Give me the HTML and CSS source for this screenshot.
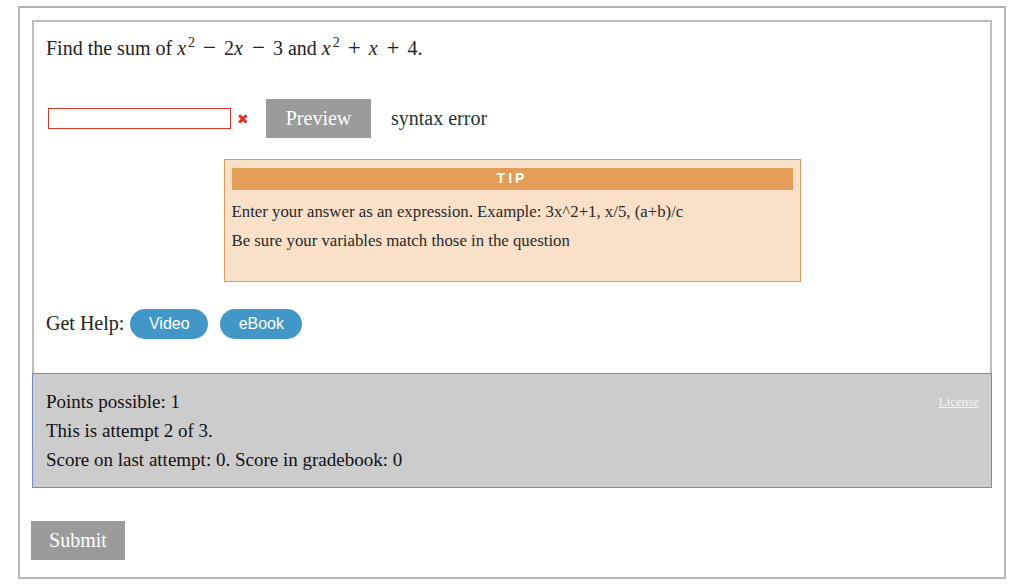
FILE: index.html
```html
<!DOCTYPE html>
<html>
<head>
<meta charset="utf-8">
<link rel="stylesheet" href="styles.css">
</head>
<body>
<div class="outer">
  <div class="question">
    <p class="prompt">Find the sum of <span class="math"><i>x</i><sup>2</sup><span class="op">−</span>2<i>x</i><span class="op">−</span>3</span> and <span class="math"><i>x</i><sup>2</sup><span class="op">+</span><i>x</i><span class="op">+</span>4</span>.</p>
    <div class="answer-row">
      <input class="answer" type="text">
      <span class="mark">✖</span>
      <button class="btn preview">Preview</button>
      <span class="syntax">syntax error</span>
    </div>
    <div class="tip">
      <div class="tip-head">TIP</div>
      <p class="tip-line">Enter your answer as an expression. Example: 3x^2+1, x/5, (a+b)/c</p>
      <p class="tip-line">Be sure your variables match those in the question</p>
    </div>
    <div class="help">
      <span class="help-label">Get Help:</span>
      <span class="pill">Video</span>
      <span class="pill pill-wide">eBook</span>
    </div>
  </div>
  <div class="footer">
    <div class="footer-lines">
      <div>Points possible: 1</div>
      <div>This is attempt 2 of 3.</div>
      <div>Score on last attempt: 0. Score in gradebook: 0</div>
    </div>
    <a class="license" href="#">License</a>
  </div>
  <button class="btn submit">Submit</button>
</div>
</body>
</html>
```
FILE: styles.css
```css
html, body {
  margin: 0;
  padding: 0;
  background: #fff;
}
body {
  font-family: "Liberation Serif", "Times New Roman", serif;
  color: #222;
}
.outer {
  margin: 6px 18px 0 18px;
  width: 960px;
  height: 557px;
  border: 2px solid #b5b5b5;
  padding: 12px 12px 0 12px;
}
.question {
  border: 2px solid #bdbdbd;
  border-bottom: none;
  padding: 12px 12px 0 12px;
  height: 339px;
}
.prompt {
  margin: 0;
  font-size: 20px;
  line-height: 28px;
}
.math i {
  font-style: italic;
  margin-right: 1px;
}
.math sup {
  font-size: 14px;
  vertical-align: 0;
  position: relative;
  top: -8px;
  margin-left: 1px;
}
.op {
  font-size: 23px;
  line-height: 20px;
  margin: 0 8px;
}
.answer-row {
  display: flex;
  align-items: center;
  margin-top: 34px;
  height: 39px;
}
.answer {
  box-sizing: border-box;
  width: 183px;
  height: 21px;
  margin: 0 0 0 2px;
  border: 1px solid #e6332a;
  padding: 0;
  outline: none;
}
.mark {
  color: #e3302b;
  font-family: "DejaVu Sans", sans-serif;
  font-size: 14px;
  margin-left: 6px;
  width: 16px;
}
.btn {
  background: #9b9b9b;
  color: #fff;
  border: none;
  font-family: "Liberation Serif", serif;
  font-size: 20px;
  padding: 0;
}
.preview {
  width: 105px;
  height: 39px;
  margin-left: 13px;
}
.syntax {
  margin-left: 20px;
  font-size: 20px;
  color: #17363a;
}
.tip {
  width: 561px;
  margin: 21px auto 0 auto;
  background: #f8e1c8;
  border: 1px solid #e19a52;
  padding: 8px 7px 0 7px;
  height: 113px;
}
.tip-head {
  background: #e39d57;
  color: #fff;
  height: 22px;
  line-height: 21px;
  text-align: center;
  font-family: "Liberation Sans", Arial, sans-serif;
  font-weight: bold;
  font-size: 14px;
  letter-spacing: 3px;
}
.tip-line {
  margin: 0;
  font-size: 16.8px;
  line-height: 29px;
  color: #2a2a2a;
}
.tip-head + .tip-line {
  margin-top: 7px;
}
.help {
  display: flex;
  align-items: center;
  margin-top: 27px;
}
.help-label {
  font-size: 20px;
  margin-right: 6px;
  position: relative;
  top: -1px;
}
.pill {
  display: inline-flex;
  align-items: center;
  justify-content: center;
  width: 78px;
  height: 30px;
  border-radius: 15px;
  background: #4198c8;
  color: #fff;
  font-family: "Liberation Sans", Arial, sans-serif;
  font-size: 16px;
  margin-right: 12px;
}
.pill-wide {
  width: 82px;
}
.footer {
  display: flex;
  justify-content: space-between;
  align-items: flex-start;
  background: #cccccc;
  border: 1px solid #6c8ec8;
  padding: 13px 12px 13px 13px;
  color: #111;
}
.footer-lines {
  font-size: 19px;
  line-height: 29px;
}
.license {
  color: #f4f4f4;
  font-size: 13px;
  line-height: 29px;
  text-decoration: underline;
}
.submit {
  display: block;
  width: 94px;
  height: 39px;
  margin: 33px 0 0 -1px;
}
```
